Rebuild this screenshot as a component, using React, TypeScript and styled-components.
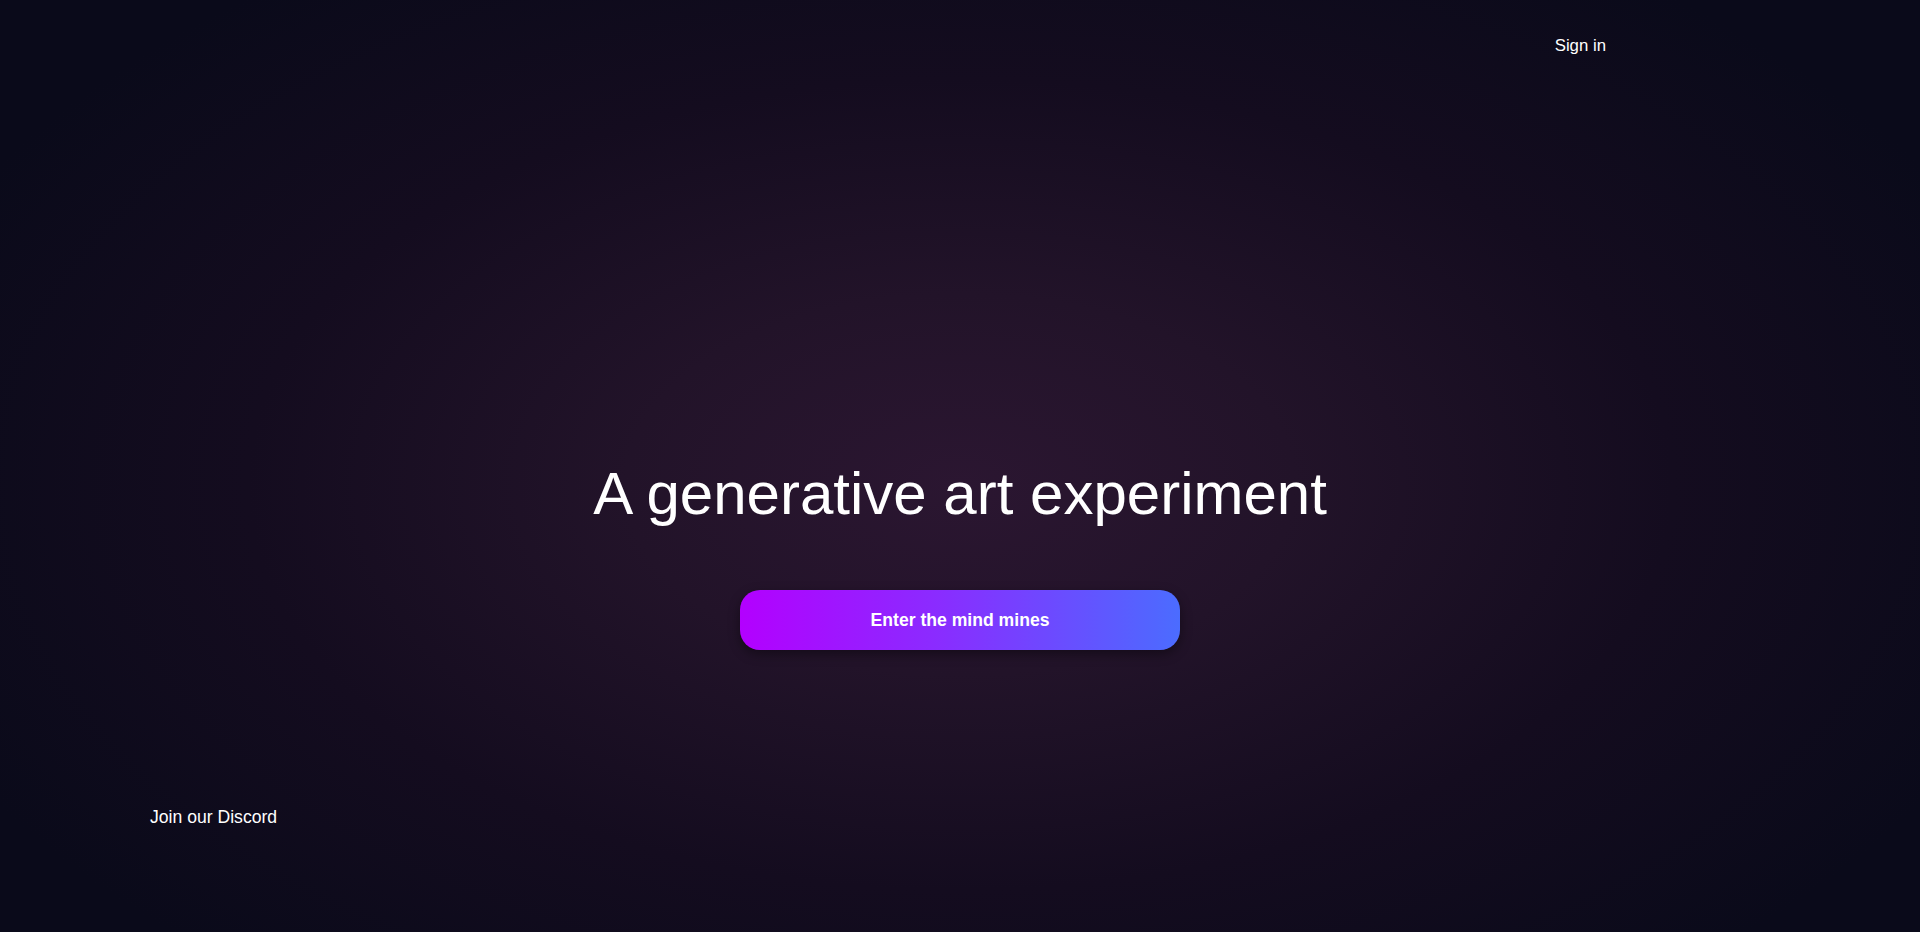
import React from "react";
import styled, { createGlobalStyle } from "styled-components";

const GlobalStyle = createGlobalStyle`
  html, body {
    margin: 0;
    padding: 0;
    background: #0a0a1a;
  }
  * { box-sizing: border-box; }
  body {
    font-family: "Liberation Sans", Arial, sans-serif;
    color: #ffffff;
  }
`;

const Page = styled.div`
  min-height: 100vh;
  display: flex;
  flex-direction: column;
  background: radial-gradient(
    ellipse 58% 68% at 50% 52%,
    #2b1631 0%,
    #221329 30%,
    #140c1f 64%,
    #0a0a1a 100%
  );
  overflow: hidden;
`;

const Header = styled.header`
  display: flex;
  justify-content: flex-end;
  padding: 34px 314px 0 0;
`;

const NavLink = styled.a<{ $size?: number }>`
  font-size: ${(p) => p.$size ?? 16}px;
  line-height: 24px;
  color: #ffffff;
  text-decoration: none;
  cursor: pointer;
`;

const Hero = styled.main`
  display: flex;
  flex-direction: column;
  align-items: center;
  padding-top: 401px;
`;

const Title = styled.h1`
  margin: 0;
  font-size: 60px;
  font-weight: 400;
  line-height: 69px;
  color: #ffffff;
`;

const CtaButton = styled.button`
  margin-top: 62px;
  width: 440px;
  height: 60px;
  border: none;
  border-radius: 20px;
  background: linear-gradient(90deg, #b300ff 0%, #8a2cff 45%, #4b6cff 100%);
  box-shadow: 0 4px 12px rgba(0, 0, 0, 0.4);
  color: #ffffff;
  font-family: "Liberation Sans", Arial, sans-serif;
  font-size: 17.6px;
  font-weight: 700;
  cursor: pointer;
`;

const Footer = styled.footer`
  display: flex;
  padding: 155px 0 0 150px;
`;

export default function App() {
  return (
    <>
      <GlobalStyle />
      <Page>
        <Header>
          <NavLink $size={16.8}>Sign in</NavLink>
        </Header>
        <Hero>
          <Title>A generative art experiment</Title>
          <CtaButton>Enter the mind mines</CtaButton>
        </Hero>
        <Footer>
          <NavLink $size={17.6}>Join our Discord</NavLink>
        </Footer>
      </Page>
    </>
  );
}
